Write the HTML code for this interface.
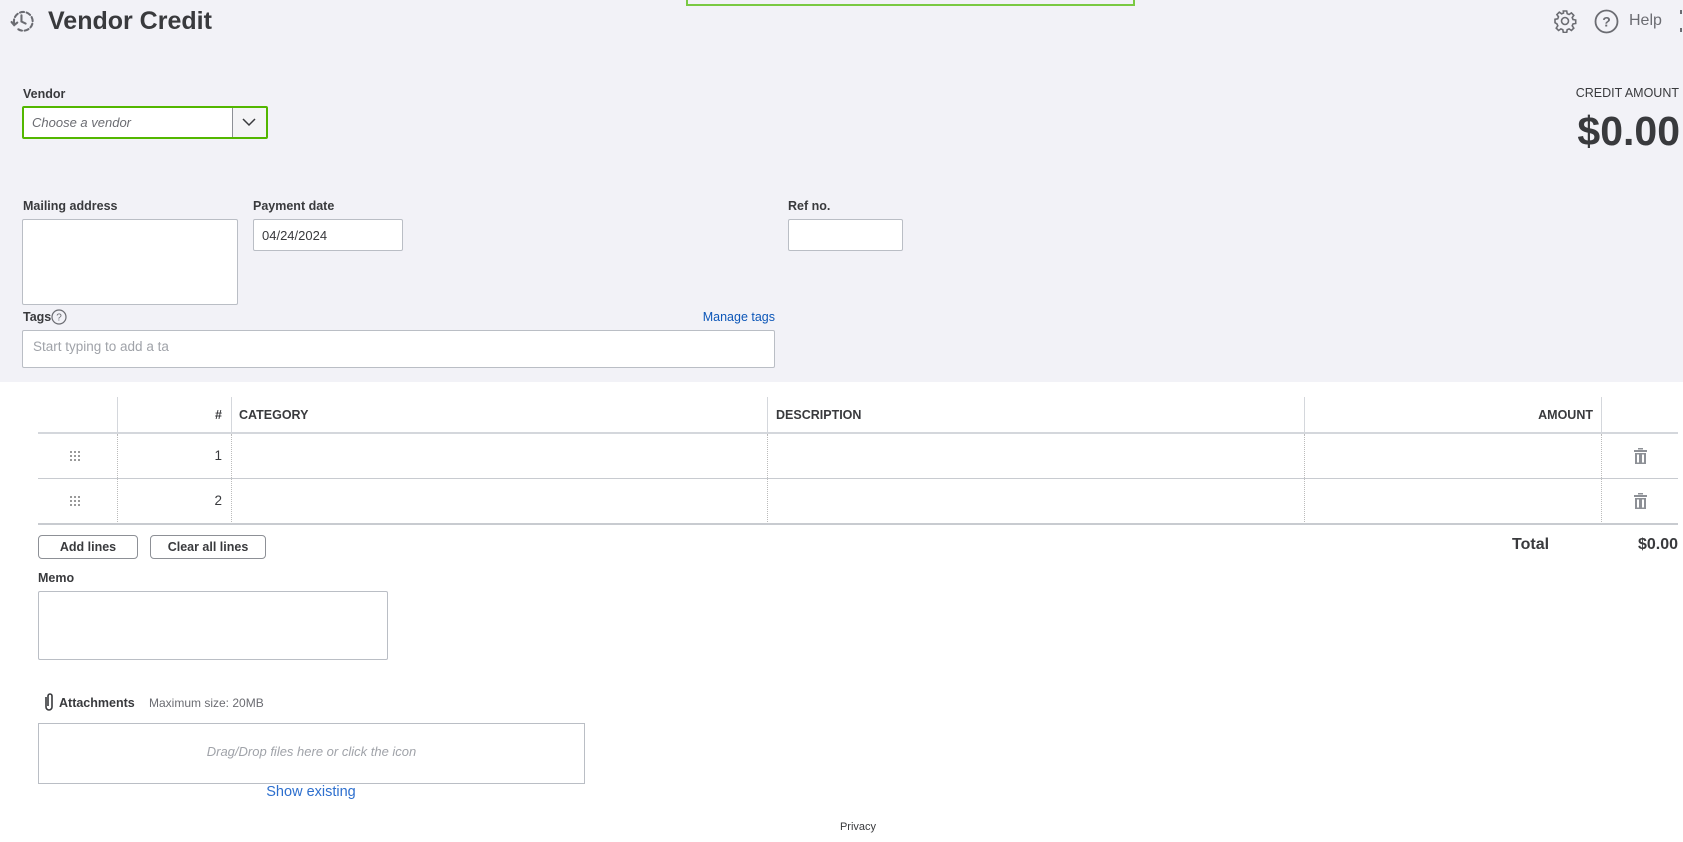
<!DOCTYPE html>
<html><head><meta charset="utf-8"><style>
*{box-sizing:border-box;margin:0;padding:0}
body{width:1683px;height:842px;overflow:hidden;background:#fff;font-family:"Liberation Sans",Arial,sans-serif;color:#393a3d;position:relative}
.a{position:absolute}
.top{left:0;top:0;width:1683px;height:382px;background:#f2f2f7}
.lbl{font-size:12.5px;font-weight:bold;color:#393a3d}
.box{background:#fff;border:1px solid #babec5;border-radius:2px}
.hd{font-size:12.5px;font-weight:bold;color:#393a3d;top:408px}
.vl{width:0;border-left:1px dotted #bbb}
.btn{border:1px solid #8d9096;border-radius:4px;background:#fff;font-size:12.5px;font-weight:bold;text-align:center;line-height:22px;color:#393a3d}
</style></head><body>
<div class="a top"></div>
<div class="a" style="left:686px;top:-2px;width:449px;height:8px;border:2px solid #7ac943;border-top:none"></div>
<svg class="a" style="left:10px;top:9px" width="25" height="25" viewBox="0 0 24 24" fill="none" stroke="#6b6c72" stroke-width="2" stroke-linecap="round"><path d="M4 14A9 9 0 1 1 8 19.5" stroke-dasharray="4 2.5"/><path d="M11 6v6l4 2"/><path d="M1.5 12.5l2.5 3 3-2.5"/></svg>
<div class="a" style="left:48px;top:7px;font-size:25px;font-weight:bold;color:#393a3d">Vendor Credit</div>
<svg class="a" style="left:1553px;top:9px" width="24" height="24" viewBox="0 0 24 24" fill="none" stroke="#6b6c72" stroke-width="1.6"><circle cx="12" cy="12" r="3.5"/><path d="M10.3 2h3.4l.5 2.7 1.9.8 2.3-1.6 2.4 2.4-1.6 2.3.8 1.9 2.7.5v3.4l-2.7.5-.8 1.9 1.6 2.3-2.4 2.4-2.3-1.6-1.9.8-.5 2.7h-3.4l-.5-2.7-1.9-.8-2.3 1.6-2.4-2.4 1.6-2.3-.8-1.9L2 13.7v-3.4l2.7-.5.8-1.9-1.6-2.3 2.4-2.4 2.3 1.6 1.9-.8z"/></svg>
<svg class="a" style="left:1594px;top:9px" width="25" height="25" viewBox="0 0 25 25" fill="none" stroke="#6b6c72" stroke-width="1.8"><circle cx="12.5" cy="12.5" r="11"/><text x="12.5" y="17.5" text-anchor="middle" font-size="14" font-weight="bold" fill="#6b6c72" stroke="none" font-family="Liberation Sans">?</text></svg>
<div class="a" style="left:1629px;top:12px;font-size:16px;color:#6b6c72">Help</div>
<div class="a" style="left:1680px;top:10px;width:2px;height:4px;background:#6b6c72"></div>
<div class="a" style="left:1680px;top:28px;width:2px;height:4px;background:#6b6c72"></div>

<div class="a lbl" style="left:23px;top:87px">Vendor</div>
<div class="a" style="left:22px;top:106px;width:246px;height:33px;border:2px solid #53b700;border-radius:2px;background:#fff"></div>
<div class="a" style="left:32px;top:115px;font-size:13px;font-style:italic;color:#6b6c72">Choose a vendor</div>
<div class="a" style="left:232px;top:108px;width:34px;height:29px;background:#f4f4f6;border-left:1px solid #8d9096"></div>
<svg class="a" style="left:241px;top:117px" width="16" height="10" viewBox="0 0 16 10" fill="none" stroke="#393a3d" stroke-width="1.5"><path d="M2 2l6 6 6-6"/></svg>

<div class="a" style="left:1520px;top:86px;width:159px;text-align:right;font-size:12.5px;color:#393a3d">CREDIT AMOUNT</div>
<div class="a" style="left:1480px;top:108px;width:200px;text-align:right;font-size:41px;font-weight:bold;color:#393a3d">$0.00</div>

<div class="a lbl" style="left:23px;top:199px">Mailing address</div>
<div class="a box" style="left:22px;top:219px;width:216px;height:86px"></div>
<div class="a lbl" style="left:253px;top:199px">Payment date</div>
<div class="a box" style="left:253px;top:219px;width:150px;height:32px"></div>
<div class="a" style="left:262px;top:228px;font-size:13px;color:#393a3d">04/24/2024</div>
<div class="a lbl" style="left:788px;top:199px">Ref no.</div>
<div class="a box" style="left:788px;top:219px;width:115px;height:32px"></div>

<div class="a lbl" style="left:23px;top:310px">Tags</div>
<svg class="a" style="left:51px;top:309px" width="16" height="16" viewBox="0 0 16 16"><circle cx="8" cy="8" r="7" fill="none" stroke="#6b6c72" stroke-width="1.2"/><text x="8" y="11.5" text-anchor="middle" font-size="10" fill="#6b6c72" font-family="Liberation Sans">?</text></svg>
<div class="a" style="left:620px;top:310px;width:155px;text-align:right;font-size:12.5px;color:#0d57b8">Manage tags</div>
<div class="a box" style="left:22px;top:330px;width:753px;height:38px"></div>
<div class="a" style="left:33px;top:339px;font-size:13.5px;color:#a0a3a9">Start typing to add a ta</div>

<div class="a" style="left:117px;top:397px;width:1px;height:35px;background:#d4d7dc"></div>
<div class="a" style="left:231px;top:397px;width:1px;height:35px;background:#d4d7dc"></div>
<div class="a" style="left:767px;top:397px;width:1px;height:35px;background:#d4d7dc"></div>
<div class="a" style="left:1304px;top:397px;width:1px;height:35px;background:#d4d7dc"></div>
<div class="a" style="left:1601px;top:397px;width:1px;height:35px;background:#d4d7dc"></div>
<div class="a hd" style="left:180px;width:42px;text-align:right">#</div>
<div class="a hd" style="left:239px">CATEGORY</div>
<div class="a hd" style="left:776px">DESCRIPTION</div>
<div class="a hd" style="left:1400px;width:193px;text-align:right">AMOUNT</div>
<div class="a" style="left:38px;top:432px;width:1640px;height:2px;background:#d4d7dc"></div>
<div class="a vl" style="left:117px;top:434px;height:90px"></div>
<div class="a vl" style="left:231px;top:434px;height:90px"></div>
<div class="a vl" style="left:767px;top:434px;height:90px"></div>
<div class="a vl" style="left:1304px;top:434px;height:90px"></div>
<div class="a vl" style="left:1601px;top:434px;height:90px"></div>
<div class="a" style="left:38px;top:478px;width:1640px;height:1px;background:#c8cbd0"></div>
<div class="a" style="left:38px;top:523px;width:1640px;height:2px;background:#c8cbd0"></div>
<svg class="a" style="left:70px;top:451px" width="10" height="10"><g fill="#999"><rect x="0" y="0" width="2" height="2"/><rect x="4" y="0" width="2" height="2"/><rect x="8" y="0" width="2" height="2"/><rect x="0" y="4" width="2" height="2"/><rect x="4" y="4" width="2" height="2"/><rect x="8" y="4" width="2" height="2"/><rect x="0" y="8" width="2" height="2"/><rect x="4" y="8" width="2" height="2"/><rect x="8" y="8" width="2" height="2"/></g></svg>
<svg class="a" style="left:70px;top:496px" width="10" height="10"><g fill="#999"><rect x="0" y="0" width="2" height="2"/><rect x="4" y="0" width="2" height="2"/><rect x="8" y="0" width="2" height="2"/><rect x="0" y="4" width="2" height="2"/><rect x="4" y="4" width="2" height="2"/><rect x="8" y="4" width="2" height="2"/><rect x="0" y="8" width="2" height="2"/><rect x="4" y="8" width="2" height="2"/><rect x="8" y="8" width="2" height="2"/></g></svg>
<div class="a" style="left:180px;top:448px;width:42px;text-align:right;font-size:13.5px">1</div>
<div class="a" style="left:180px;top:493px;width:42px;text-align:right;font-size:13.5px">2</div>
<svg class="a" style="left:1634px;top:448px" width="13" height="16" viewBox="0 0 13 16" fill="#8d9096"><rect x="4" y="0" width="5" height="1.5"/><rect x="0" y="2" width="13" height="2"/><path d="M1 5h11v11H1z M3 6.5v8h2v-8z M8 6.5v8h2v-8z" fill-rule="evenodd"/></svg>
<svg class="a" style="left:1634px;top:493px" width="13" height="16" viewBox="0 0 13 16" fill="#8d9096"><rect x="4" y="0" width="5" height="1.5"/><rect x="0" y="2" width="13" height="2"/><path d="M1 5h11v11H1z M3 6.5v8h2v-8z M8 6.5v8h2v-8z" fill-rule="evenodd"/></svg>

<div class="a btn" style="left:38px;top:535px;width:100px;height:24px">Add lines</div>
<div class="a btn" style="left:150px;top:535px;width:116px;height:24px">Clear all lines</div>
<div class="a" style="left:1512px;top:536px;font-size:16px;font-weight:bold;color:#393a3d">Total</div>
<div class="a" style="left:1580px;top:536px;width:98px;text-align:right;font-size:16px;font-weight:bold;color:#393a3d">$0.00</div>

<div class="a lbl" style="left:38px;top:571px">Memo</div>
<div class="a box" style="left:38px;top:591px;width:350px;height:69px"></div>

<svg class="a" style="left:42px;top:692px" width="14" height="20" viewBox="0 0 14 20" fill="none" stroke="#393a3d" stroke-width="1.6"><path d="M4 5v10a3 3 0 0 0 6 0V4a2 2 0 0 0-4 0v10"/></svg>
<div class="a lbl" style="left:59px;top:696px">Attachments</div>
<div class="a" style="left:149px;top:696px;font-size:12px;color:#6b6c72">Maximum size: 20MB</div>
<div class="a box" style="left:38px;top:723px;width:547px;height:61px;border-radius:0"></div>
<div class="a" style="left:38px;top:744px;width:547px;text-align:center;font-size:13px;font-style:italic;color:#a0a3a9">Drag/Drop files here or click the icon</div>
<div class="a" style="left:211px;top:784px;width:200px;text-align:center;font-size:14.5px;color:#2d6fce">Show existing</div>
<div class="a" style="left:800px;top:821px;width:116px;text-align:center;font-size:11px;color:#393a3d">Privacy</div>
</body></html>
